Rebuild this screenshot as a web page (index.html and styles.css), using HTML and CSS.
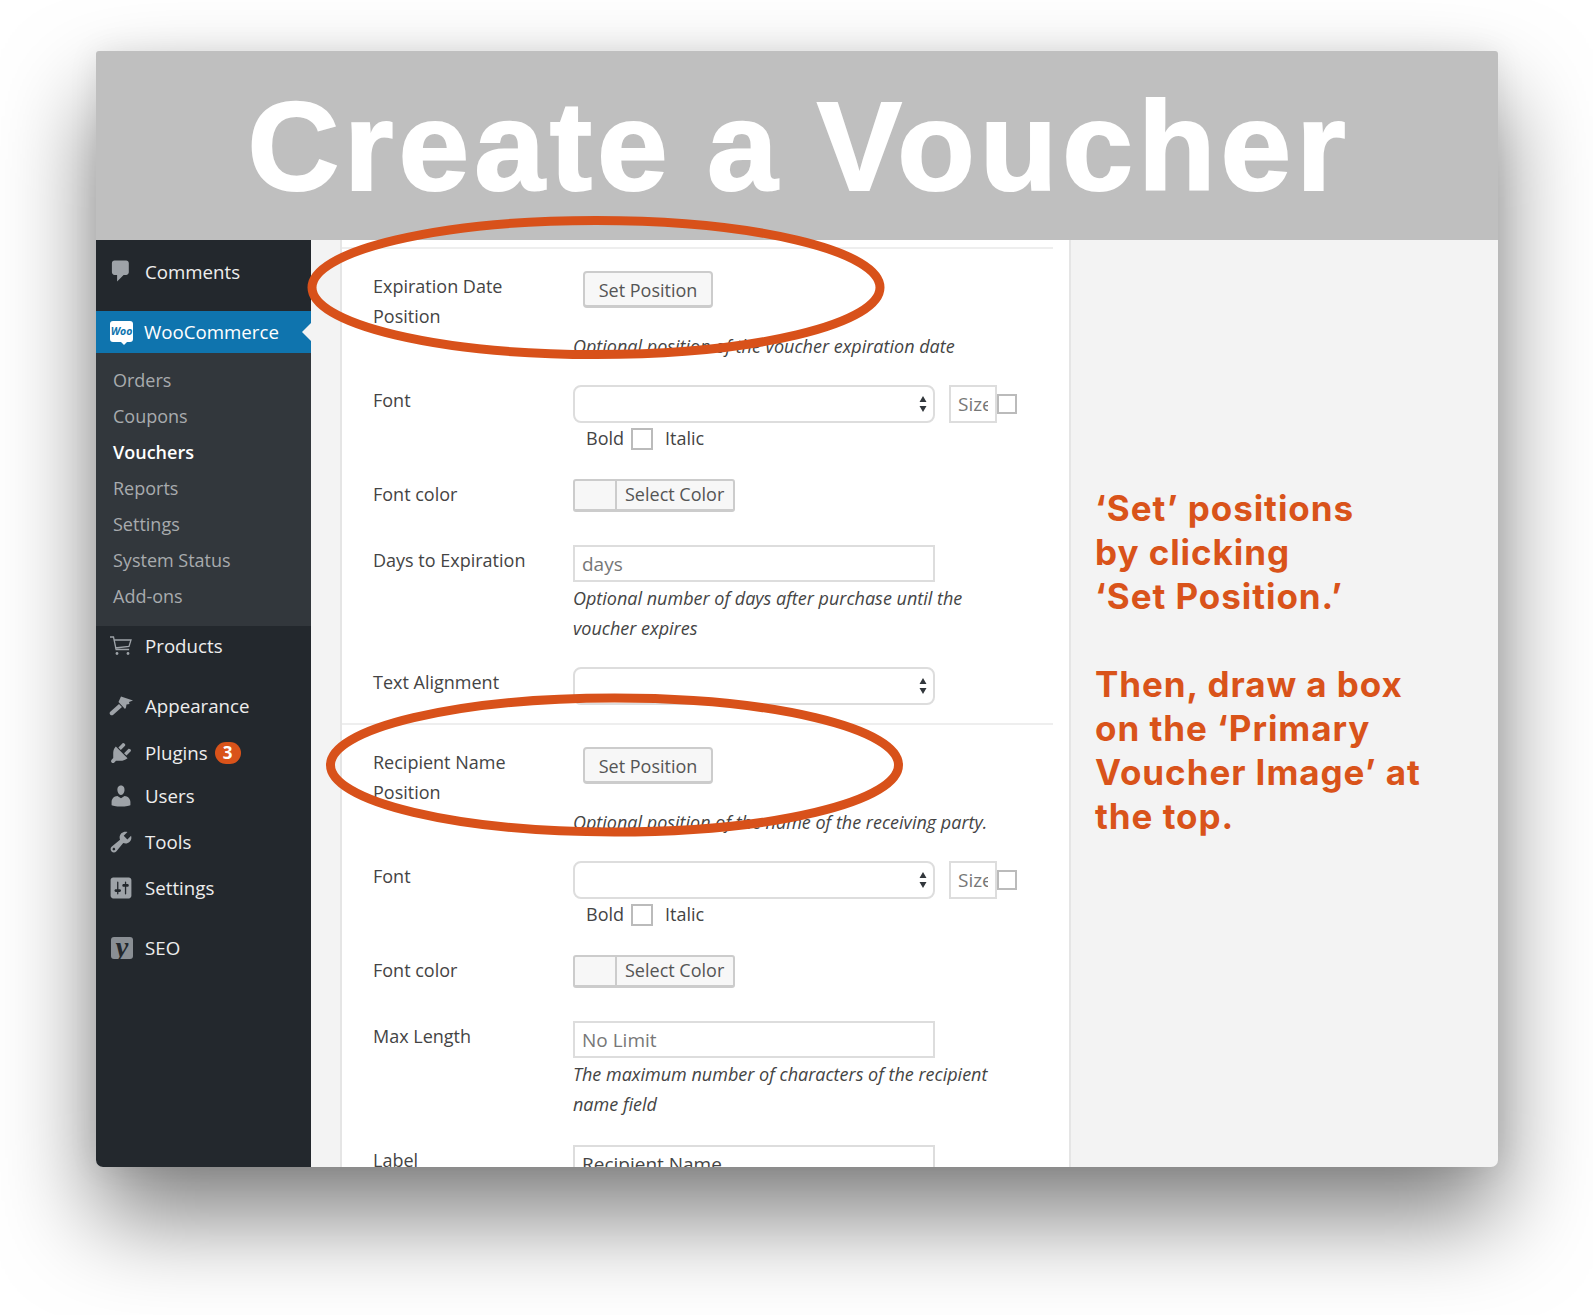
FILE: index.html
```html
<!DOCTYPE html>
<html lang="en">
<head>
<meta charset="utf-8">
<title>Create a Voucher</title>
<link rel="stylesheet" href="styles.css">
</head>
<body>
<div class="window">
  <header class="banner"><h1>Create a Voucher</h1></header>
  <div class="body">
    <nav class="sidebar">
      <a class="menu first">
        <svg class="ic" viewBox="0 0 20 20"><path d="M5 2h9c1.1 0 2 .9 2 2v7c0 1.1-.9 2-2 2h-2l-5 5v-5H5c-1.1 0-2-.9-2-2V4c0-1.1.9-2 2-2z"/></svg>
        <span>Comments</span>
      </a>
      <a class="menu current">
        <span class="woo"><span>Woo</span></span>
        <span>WooCommerce</span>
      </a>
      <ul class="submenu">
        <li>Orders</li>
        <li>Coupons</li>
        <li class="on">Vouchers</li>
        <li>Reports</li>
        <li>Settings</li>
        <li>System Status</li>
        <li>Add-ons</li>
      </ul>
      <a class="menu products">
        <svg class="ic ic-wide" viewBox="0 0 24 20"><path class="cart" d="M1 1h3.500l2.600 12.500h13M5 4h17l-2 6.500-14 1.500"/><circle cx="8" cy="17.500" r="1.400"/><circle cx="19" cy="17.500" r="1.400"/></svg>
        <span>Products</span>
      </a>
      <a class="menu group appearance">
        <svg class="ic ic-wide" viewBox="0 0 24 20"><path d="M1 16l9-8 3 3-9 8c-.8.6-2 .4-2.700-.3S.4 16.800 1 16zM9.500 6L12 .5l12 4-4 1.500.5 2-3 .5-.5 3-1 1.500z"/></svg>
        <span>Appearance</span>
      </a>
      <a class="menu plugins">
        <svg class="ic" viewBox="0 0 20 20"><path d="M13.110 4.360L9.870 7.600 8 5.730l3.240-3.240c.35-.34 1.050-.2 1.560.32.52.51.66 1.210.31 1.550zm-8 1.770l.91-1.120 9.010 9.010-1.190.84c-.71.71-2.630 1.160-3.820 1.160H6.140L4.900 17.260c-.59.59-1.540.59-2.120 0-.59-.58-.59-1.530 0-2.120l1.240-1.240v-3.880c0-1.130.4-3.190 1.090-3.890zm7.260 3.970l3.240-3.240c.34-.35 1.040-.21 1.550.31.52.51.66 1.210.31 1.550l-3.240 3.250z"/></svg>
        <span>Plugins</span><b class="badge">3</b>
      </a>
      <a class="menu users">
        <svg class="ic" viewBox="0 0 20 20"><path d="M10 9.250c-2.270 0-2.730-3.440-2.730-3.440C7 4.020 7.820 2 9.970 2c2.160 0 2.980 2.020 2.710 3.810 0 0-.41 3.440-2.680 3.440zm0 2.570L12.720 10c2.390 0 4.520 2.330 4.520 4.530v2.490s-3.650 1.130-7.240 1.130c-3.650 0-7.240-1.130-7.240-1.130v-2.490c0-2.250 1.940-4.480 4.470-4.480z"/></svg>
        <span>Users</span>
      </a>
      <a class="menu tools">
        <svg class="ic" viewBox="0 0 20 20"><path d="M16.680 9.770c-1.340 1.340-3.300 1.670-4.950.99l-5.410 6.520c-.99.99-2.590.99-3.580 0s-.99-2.590 0-3.570l6.520-5.420c-.68-1.650-.35-3.610.99-4.950 1.280-1.280 3.120-1.620 4.720-1.060l-2.890 2.890 2.820 2.820 2.860-2.870c.53 1.580.18 3.390-1.080 4.650zM3.810 16.210c.4.39 1.040.39 1.430 0 .4-.4.4-1.040 0-1.430-.39-.4-1.030-.4-1.430 0-.39.39-.39 1.030 0 1.430z"/></svg>
        <span>Tools</span>
      </a>
      <a class="menu tools">
        <svg class="ic" viewBox="0 0 20 20"><path d="M18 16V4c0-1.100-.9-2-2-2H4c-1.100 0-2 .9-2 2v12c0 1.100.9 2 2 2h12c1.100 0 2-.9 2-2zM8 11h1c.55 0 1 .45 1 1s-.45 1-1 1H8v1.500c0 .28-.22.5-.5.5s-.5-.22-.5-.5V13H6c-.55 0-1-.45-1-1s.45-1 1-1h1V5.500c0-.28.22-.5.5-.5s.5.22.5.5V11zm5-2h-1c-.55 0-1-.45-1-1s.45-1 1-1h1V5.500c0-.28.22-.5.5-.5s.5.22.5.5V7h1c.55 0 1 .45 1 1s-.45 1-1 1h-1v5.500c0 .28-.22.5-.5.5s-.5-.22-.5-.5V9z"/></svg>
        <span>Settings</span>
      </a>
      <a class="menu group">
        <span class="yoast"><span>y</span></span>
        <span>SEO</span>
      </a>
    </nav>
    <div class="gutter"></div>
    <main class="card">
      <section class="block">
        <div class="row">
          <div class="label">Expiration Date Position</div>
          <div class="field">
            <button class="btn">Set Position</button>
            <p class="desc top">Optional position of the voucher expiration date</p>
          </div>
        </div>
        <div class="row">
          <div class="label">Font</div>
          <div class="field">
            <div class="controls">
              <div class="select-wrap"><select class="select"></select><svg class="arrows" viewBox="0 0 8 16"><path d="M4 0l3.500 6H.5zM4 16L.5 10h7z"/></svg></div>
              <input class="input size" placeholder="Size"><input class="check small" type="checkbox">
            </div>
            <div class="style-row"><span>Bold</span><input class="check" type="checkbox"><span class="italic">Italic</span></div>
          </div>
        </div>
        <div class="row">
          <div class="label">Font color</div>
          <div class="field"><div class="color"><span class="swatch"></span><span class="color-text">Select Color</span></div></div>
        </div>
        <div class="row">
          <div class="label">Days to Expiration</div>
          <div class="field">
            <input class="input wide" placeholder="days">
            <p class="desc">Optional number of days after purchase until the voucher expires</p>
          </div>
        </div>
        <div class="row">
          <div class="label">Text Alignment</div>
          <div class="field"><div class="select-wrap"><select class="select"></select><svg class="arrows" viewBox="0 0 8 16"><path d="M4 0l3.500 6H.5zM4 16L.5 10h7z"/></svg></div></div>
        </div>
      </section>
      <section class="block">
        <div class="row">
          <div class="label">Recipient Name Position</div>
          <div class="field">
            <button class="btn">Set Position</button>
            <p class="desc top">Optional position of the name of the receiving party.</p>
          </div>
        </div>
        <div class="row">
          <div class="label">Font</div>
          <div class="field">
            <div class="controls">
              <div class="select-wrap"><select class="select"></select><svg class="arrows" viewBox="0 0 8 16"><path d="M4 0l3.500 6H.5zM4 16L.5 10h7z"/></svg></div>
              <input class="input size" placeholder="Size"><input class="check small" type="checkbox">
            </div>
            <div class="style-row"><span>Bold</span><input class="check" type="checkbox"><span class="italic">Italic</span></div>
          </div>
        </div>
        <div class="row">
          <div class="label">Font color</div>
          <div class="field"><div class="color"><span class="swatch"></span><span class="color-text">Select Color</span></div></div>
        </div>
        <div class="row">
          <div class="label">Max Length</div>
          <div class="field">
            <input class="input wide" placeholder="No Limit">
            <p class="desc">The maximum number of characters of the recipient name field</p>
          </div>
        </div>
        <div class="row row-last">
          <div class="label">Label</div>
          <div class="field"><input class="input wide filled" value="Recipient Name"></div>
        </div>
      </section>
    </main>
    <aside class="note">
      <p>‘Set’ positions<br>by clicking<br>‘Set Position.’</p>
      <p>Then, draw a box<br>on the ‘Primary<br>Voucher Image’ at<br>the top.</p>
    </aside>
  </div>
  <svg class="marks" viewBox="0 0 1402 1116">
    <ellipse cx="500" cy="236.500" rx="284" ry="67"/>
    <ellipse cx="518.500" cy="714" rx="284" ry="67"/>
  </svg>
</div>
</body>
</html>
```

FILE: styles.css
```css
* { box-sizing: border-box; }
html, body { margin: 0; background: #fff; }
body { padding: 51px 0 0 96px; height: 1315px; overflow: hidden; font-family: "Open Sans", sans-serif; color: #444; }

.window {
  position: relative;
  width: 1402px;
  height: 1116px;
  display: flex;
  flex-direction: column;
  border-radius: 3px 3px 7px 7px;
  box-shadow: 0 50px 95px rgba(0,0,0,.5), 0 0 30px rgba(0,0,0,.08);
  overflow: hidden;
  background: #f3f3f3;
}
.banner { height: 189px; flex: none; background: #bfbfbf; display: flex; justify-content: center; padding-left: 4px; }
.banner h1 { margin: 0; color: #fff; font: 700 127px/191px "Liberation Sans", Arial, sans-serif; letter-spacing: 5px; word-spacing: -6px; -webkit-text-stroke: 2px #fff; }

.body { flex: 1; display: flex; min-height: 0; }

.sidebar { width: 215px; flex: none; background: #23282d; color: #eee; font-size: 18.700px; }
.menu { display: flex; align-items: center; height: 45px; padding-left: 12px; position: relative; }
.menu.first { height: 71px; padding-bottom: 9px; }
.menu.group { margin-top: 15px; }
.menu.appearance { margin-top: 16px; }
.menu.plugins { margin-top: 2px; }
.menu.users { margin-top: -2px; }
.menu.tools { margin-top: 1px; }
.menu .ic { width: 26px; height: 26px; margin-right: 11px; fill: #9ea3a8; flex: none; }
.menu .ic-wide { width: 24px; height: 20px; margin: 0 12px 0 1px; }
.menu.products { height: 41px; padding-bottom: 2px; }
.cart { fill: none; stroke: #9ea3a8; stroke-width: 1.300; }
.current { height: 42px; padding-bottom: 2px; background: #0f74ae; color: #fff; }
.current::after {
  content: "";
  position: absolute;
  right: 0;
  top: 12px;
  border: 9px solid transparent;
  border-right-color: #f3f3f3;
  border-left-width: 0;
}
.woo { position: relative; width: 23px; height: 21px; margin: 0 11px 0 2px; background: #fff; border-radius: 3px; display: flex; align-items: center; justify-content: center; color: #0f74ae; font: italic 700 10.500px/1 "Open Sans", sans-serif; }
.woo::after { content: ""; position: absolute; left: 11px; bottom: -3px; border: 3px solid transparent; border-top-color: #fff; border-bottom-width: 0; }
.submenu { list-style: none; margin: 0; padding: 9px 0 12px 17px; background: #32373c; font-size: 18px; line-height: 36px; color: #a8abae; }
.submenu .on { color: #fff; font-weight: 600; }
.badge { margin-left: 7px; width: 26px; height: 22px; border-radius: 11px; background: #d9531a; color: #fff; font-size: 17px; line-height: 22px; text-align: center; }
.yoast { width: 22px; height: 22px; margin: 0 12px 0 3px; background: #8a8f94; border-radius: 3px; color: #23282d; display: flex; align-items: center; justify-content: center; font: italic 700 29px/1 "Liberation Serif", serif; }

.gutter { width: 29px; flex: none; }
.card {
  width: 731px;
  flex: none;
  background: #fff;
  border-left: 2px solid #e5e5e5;
  border-right: 2px solid #e5e5e5;
  padding-right: 16px;
  font-size: 18px;
  line-height: 30px;
  overflow: hidden;
}
.block { border-top: 2px solid #eee; padding: 22px 0 0 31px; margin-top: 7px; }
.block + .block { margin-top: -6px; }
.row { display: grid; grid-template-columns: 200px 1fr; padding-bottom: 24px; }
.row-last { margin-top: 2px; }
.label { padding-right: 40px; }
.field { min-width: 0; }
.desc { margin: 1px 0 0; font-style: italic; max-width: 430px; }
.desc.top { margin: 23px 0 0; }
.btn {
  display: block;
  width: 130px;
  height: 37px;
  margin: 0 0 0 10px;
  padding: 1px 0 0;
  background: #f7f7f7;
  border: 2px solid #ccc;
  border-bottom-width: 3px;
  border-radius: 4px;
  font: 18px "Open Sans", sans-serif;
  color: #555;
}
.controls { display: flex; align-items: center; }
.select-wrap { position: relative; width: 362px; height: 38px; }
.select { display: block; width: 100%; height: 100%; appearance: none; background: #fff; border: 2px solid #ddd; border-radius: 8px; }
.arrows { position: absolute; right: 8px; top: 11px; width: 8px; height: 16px; fill: #32373c; }
.input { height: 37px; border: 2px solid #ddd; background: #fff; padding: 0 7px; font: 19px "Open Sans", sans-serif; color: #444; }
.input::placeholder { color: #777; opacity: 1; }
.input.wide { display: block; width: 362px; }
.input.size { width: 48px; height: 38px; margin-left: 14px; }
.check { appearance: none; margin: 0; width: 22px; height: 22px; border: 2px solid #bbb; background: #fff; flex: none; }
.check.small { width: 20px; height: 20px; }
.style-row { display: flex; align-items: center; height: 32px; padding: 0 0 3px 13px; }
.style-row .check { margin: 2px 12px 0 7px; }
.color { display: flex; width: 162px; height: 33px; margin-bottom: 9px; background: #f7f7f7; border: 2px solid #ccc; border-bottom-width: 3px; border-radius: 3px; color: #555; line-height: 27px; }
.swatch { width: 42px; border-right: 2px solid #ccc; }
.color-text { padding-left: 8px; font-size: 18px; }

.note { flex: 1; padding: 246px 0 0 24px; color: #d9531a; font: 700 35px/44px Inter, sans-serif; letter-spacing: .95px; }
.note p { margin: 0 0 44px; }

.marks { position: absolute; left: 0; top: 0; width: 100%; height: 100%; pointer-events: none; }
.marks ellipse { fill: none; stroke: #d8511a; stroke-width: 9; }
```
